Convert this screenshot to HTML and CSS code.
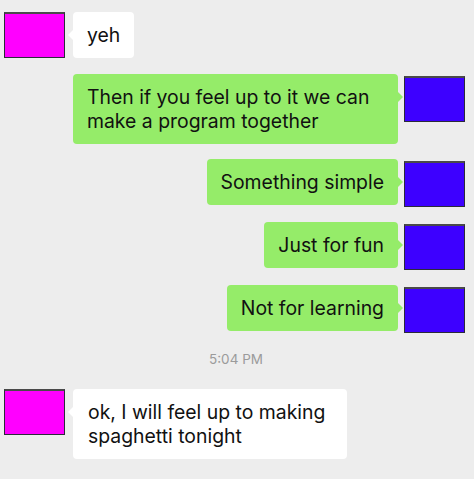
FILE: index.html
```html
<!DOCTYPE html>
<html lang="en">
<head>
    <meta charset="UTF-8">
    <meta name="viewport" content="width=device-width, initial-scale=1.0">
    <title>Chat</title>
    <link rel="stylesheet" href="styles.css">
</head>
<body>
    <div class="chat">
        <div class="row them">
            <div class="avatar pink"></div>
            <div class="bubble">yeh</div>
        </div>

        <div class="row me">
            <div class="bubble">Then if you feel up to it we can make a program together</div>
            <div class="avatar blue"></div>
        </div>

        <div class="row me">
            <div class="bubble">Something simple</div>
            <div class="avatar blue"></div>
        </div>

        <div class="row me">
            <div class="bubble">Just for fun</div>
            <div class="avatar blue"></div>
        </div>

        <div class="row me">
            <div class="bubble">Not for learning</div>
            <div class="avatar blue"></div>
        </div>

        <div class="time">5:04 PM</div>

        <div class="row them">
            <div class="avatar pink"></div>
            <div class="bubble">ok, I will feel up to making spaghetti tonight</div>
        </div>
    </div>
</body>
</html>
```

FILE: styles.css
```css
* { margin: 0; padding: 0; box-sizing: border-box; }
body {
    font-family: 'Inter', 'Noto Sans', sans-serif;
    background-color: #ededed;
    color: #111;
    width: 474px;
    height: 479px;
    overflow: hidden;
}
.chat {
    display: flex;
    flex-direction: column;
    padding: 12px 9px 0 4px;
}
.row {
    display: flex;
    align-items: flex-start;
    margin-bottom: 15px;
}
.row.them {
    gap: 8px;
    margin-bottom: 16px;
}
.row.me {
    justify-content: flex-end;
    gap: 6px;
}
.avatar {
    width: 61px;
    height: 46px;
    flex-shrink: 0;
    border: 1px solid #2b2b3a;
    border-top: 2px solid #4a4a4a;
}
.pink { background: #ff00ff; }
.blue { background: #3d00ff; margin-top: 2px; }
.bubble {
    position: relative;
    font-size: 19.4px;
    line-height: 24px;
    padding: 11px 14px;
    border-radius: 4px;
    background: #fff;
    max-width: 325px;
}
.me .bubble {
    background: #95ec69;
}
.bubble::after {
    content: "";
    position: absolute;
    top: 17px;
    border: 6px solid transparent;
}
.them .bubble::after {
    left: -11px;
    border-right-color: #fff;
}
.me .bubble::after {
    right: -11px;
    border-left-color: #95ec69;
}
.them:last-child .bubble {
    max-width: 274px;
    padding-left: 15px;
}
.time {
    text-align: center;
    font-size: 13.5px;
    line-height: 20px;
    color: #9b9b9b;
    margin: 1px 0 20px;
    padding-left: 3px;
}
```
